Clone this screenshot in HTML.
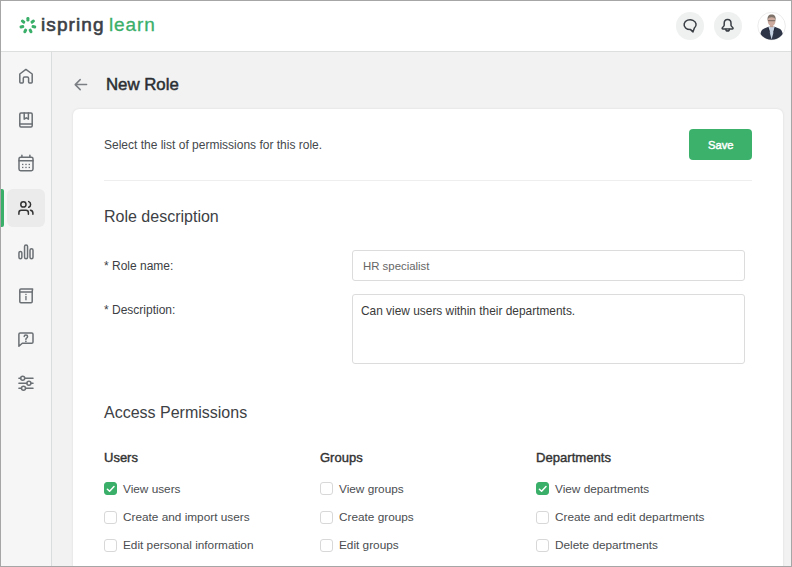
<!DOCTYPE html>
<html><head><meta charset="utf-8">
<style>
*{box-sizing:border-box;margin:0;padding:0}
html,body{width:792px;height:567px;overflow:hidden;background:#f2f2f2}
body{font-family:"Liberation Sans",sans-serif;color:#333;position:relative}
.abs{position:absolute}
#frame{position:absolute;left:0;top:0;width:792px;height:567px;border:1px solid #a6a6a6;pointer-events:none;z-index:50}
#header{position:absolute;left:0;top:0;width:792px;height:52px;background:#fff;border-bottom:1px solid #dddfdf}
#side{position:absolute;left:0;top:52px;width:52px;height:515px;background:#f6f6f6;border-right:1px solid #dadddd}
#card{position:absolute;left:73px;top:109px;width:710px;height:470px;background:#fff;border-radius:6px;box-shadow:0 0 2.5px rgba(0,0,0,0.11)}
.t{position:absolute;white-space:nowrap;line-height:1}
.cb{position:absolute;width:13px;height:13px;border:1px solid #d8d8d8;border-radius:3px;background:#fff}
.cb.on{background:#3aaf6a;border-color:#3aaf6a}
.lb{position:absolute;white-space:nowrap;line-height:1;font-size:11.8px;color:#4a4d50}
svg{position:absolute;overflow:visible}
</style></head><body>
<div id="header">
  <div class="t" style="left:41px;top:14.5px;font-size:19px;color:#3b4046;-webkit-text-stroke:0.6px #3b4046;letter-spacing:1.1px">ispring</div>
  <div class="t" style="left:109px;top:14.5px;font-size:19px;color:#3aaf6a;-webkit-text-stroke:0.3px #3aaf6a;letter-spacing:0.9px">learn</div>
  <div class="abs" style="left:676px;top:12px;width:28px;height:28px;border-radius:50%;background:#eff0f0"></div>
  <div class="abs" style="left:714px;top:12px;width:28px;height:28px;border-radius:50%;background:#eff0f0"></div>
</div>
<div id="side"></div>
<!-- active nav -->
<div class="abs" style="left:7px;top:189px;width:38px;height:38px;border-radius:6px;background:#ebebeb"></div>
<div class="abs" style="left:1px;top:189px;width:3px;height:38px;border-radius:0 2px 2px 0;background:#3aaf6a"></div>

<!-- page-coordinate SVG -->
<svg style="left:0;top:0" width="792" height="567" viewBox="0 0 792 567">
  <!-- logo -->
  <g fill="#3aaf6a" transform="translate(27.9 25.4)">
    <rect x="-1.5" y="-8.5" width="3" height="4.7" rx="1.3"/>
    <rect x="-1.5" y="-8.5" width="3" height="4.7" rx="1.3" transform="rotate(51.43)"/>
    <rect x="-1.5" y="-8.5" width="3" height="4.7" rx="1.3" transform="rotate(102.86)"/>
    <rect x="-1.5" y="-8.5" width="3" height="4.7" rx="1.3" transform="rotate(154.29)"/>
    <rect x="-1.5" y="-8.5" width="3" height="4.7" rx="1.3" transform="rotate(205.71)"/>
    <rect x="-1.5" y="-8.5" width="3" height="4.7" rx="1.3" transform="rotate(257.14)"/>
    <rect x="-1.5" y="-8.5" width="3" height="4.7" rx="1.3" transform="rotate(308.57)"/>
  </g>
  <!-- header icons -->
  <g fill="none" stroke="#3a3f45" stroke-width="1.5" stroke-linejoin="round" stroke-linecap="round">
    <path d="M690.6 29.6 A6 4.95 0 1 1 694.3 28.2 L692.9 31.9 Z"/>
    <path d="M727.6 19.5 C725.5 19.5 724.2 21 724.2 23.3 V25.3 C724.2 26.6 722.1 27.3 722.1 28.2 Q722.1 28.9 722.8 28.9 H732.4 Q733.1 28.9 733.1 28.2 C733.1 27.3 731 26.6 731 25.3 V23.3 C731 21 729.7 19.5 727.6 19.5 Z"/>
    <path d="M725.9 29.2 C725.9 31.7 729.3 31.7 729.3 29.2" fill="#80858a"/>
  </g>
  <!-- avatar -->
  <defs><clipPath id="av"><circle cx="771.6" cy="26.1" r="13.6"/></clipPath></defs>
  <circle cx="771.6" cy="26.1" r="13.8" fill="#fff" stroke="#e6e6e6" stroke-width="0.8"/>
  <g clip-path="url(#av)">
    <path d="M759.8 40 C760 33 761.2 29.6 764.2 28.4 L768.6 26.8 H774.6 L779 28.4 C782 29.6 783.2 33 783.4 40 Z" fill="#2e3547"/>
    <path d="M768.4 26.9 H774.8 L773.2 33.5 L771.6 39.5 L770 33.5 Z" fill="#c6d2e2"/>
    <path d="M768.5 27 L770.4 33.5 L767.9 29.6 Z M774.7 27 L772.8 33.5 L775.3 29.6 Z" fill="#232a3a"/>
    <rect x="770.1" y="24.6" width="3" height="2.6" fill="#bf9c90"/>
    <ellipse cx="771.6" cy="20.8" rx="3.9" ry="5.3" fill="#ccaa9e"/>
    <path d="M767.6 21 C767.1 16.4 768.8 14.6 771.6 14.6 C774.5 14.6 776.2 16.4 775.6 21 C775.3 18.2 774.2 17.2 771.6 17.2 C769 17.2 767.9 18.2 767.6 21 Z" fill="#7e736a"/>
    <path d="M768 20.7 H775.2" stroke="#4a4642" stroke-width="0.7" fill="none"/>
  </g>
  <!-- back arrow -->
  <g fill="none" stroke="#7b7f84" stroke-width="1.5" stroke-linecap="round" stroke-linejoin="round">
    <path d="M86.6 84.6 H75.4 M80.2 79.6 L75.2 84.6 L80.2 89.6"/>
  </g>
  <!-- sidebar icons -->
  <g fill="none" stroke="#6b7075" stroke-width="1.5" stroke-linejoin="round" stroke-linecap="round">
    <!-- home -->
    <path d="M19.8 74 L25.9 69.4 L32.2 74 V82 Q32.2 82.9 31.3 82.9 H29.5 Q28.6 82.9 28.6 82 V78.3 Q28.6 77 27.3 77 H24.6 Q23.3 77 23.3 78.3 V82 Q23.3 82.9 22.4 82.9 H20.7 Q19.8 82.9 19.8 82 Z"/>
    <!-- book -->
    <rect x="19.8" y="113" width="12.4" height="14" rx="1.2"/>
    <path d="M19.8 124.1 H32.2"/>
    <path d="M24.2 113 V119.2 L26.3 117.8 L28.4 119.2 V113"/>
    <!-- calendar -->
    <rect x="19" y="157.2" width="14" height="13.5" rx="1.6"/>
    <path d="M19 160.8 H33 M21.9 155.3 V157.2 M29.9 155.3 V157.2"/>
    <!-- chart -->
    <rect x="18.95" y="251.4" width="2.9" height="7.3" rx="1.45"/>
    <rect x="24.55" y="244.95" width="3" height="13.75" rx="1.5"/>
    <rect x="30.0" y="248.85" width="3" height="9.85" rx="1.5"/>
    <!-- info book -->
    <path d="M19.8 290 Q19.8 288.9 20.9 288.9 H32.6 L32.2 291.5 V301.6 Q32.2 302.7 31.1 302.7 H20.9 Q19.8 302.7 19.8 301.6 Z"/>
    <path d="M19.8 291.9 H32.2"/>
    <!-- help -->
    <path d="M18.9 346.3 V334.2 Q18.9 332.9 20.2 332.9 H31.7 Q33 332.9 33 334.2 V342 Q33 343.3 31.7 343.3 H22.3 Z"/>
    <path d="M24.2 336.6 Q24.2 335 25.9 335 Q27.6 335 27.6 336.6 Q27.6 337.6 26.6 338.1 Q25.9 338.5 25.9 339.5"/>
    <!-- settings -->
    <path d="M18.9 378.2 H20.6 M24.8 378.2 H33 M18.9 383.2 H26.8 M31 383.2 H33 M18.9 388.3 H21.4 M25.6 388.3 H33"/>
    <circle cx="22.7" cy="378.2" r="2"/>
    <circle cx="28.9" cy="383.2" r="2"/>
    <circle cx="23.5" cy="388.3" r="2"/>
  </g>
  <g fill="#6b7075">
    <rect x="22" y="163.8" width="1.4" height="1.3"/><rect x="25.3" y="163.8" width="1.4" height="1.3"/><rect x="28.6" y="163.8" width="1.4" height="1.3"/>
    <rect x="22" y="166.8" width="1.4" height="1.3"/><rect x="25.3" y="166.8" width="1.4" height="1.3"/><rect x="28.6" y="166.8" width="1.4" height="1.3"/>
    <rect x="25.3" y="293.8" width="1.3" height="1.3"/><rect x="25.3" y="296" width="1.3" height="4.3"/>
    <circle cx="25.9" cy="341.3" r="0.85"/>
  </g>
  <!-- users icon active -->
  <g fill="none" stroke="#333" stroke-width="1.5" stroke-linecap="round">
    <circle cx="23.4" cy="204.4" r="2.6"/>
    <path d="M28.7 201.6 A3 3 0 0 1 28.7 207.2"/>
    <path d="M18.9 214.3 V212.7 Q18.9 210.3 21.3 210.3 H26 Q28.4 210.3 28.4 212.7 V214.3"/>
    <path d="M30.4 210.2 Q32.9 210.5 32.9 213 V214.3"/>
  </g>
</svg>

<div class="t" style="left:106px;top:77px;font-size:16.8px;color:#2b2f33;-webkit-text-stroke:0.5px #2b2f33">New Role</div>
<div id="card"></div>
<div class="t" style="left:104px;top:139px;font-size:12px;color:#44484c">Select the list of permissions for this role.</div>
<div class="abs" style="left:689px;top:129px;width:63px;height:31px;background:#3cb16c;border-radius:4px"></div>
<div class="t" style="left:708px;top:139.5px;font-size:11.2px;color:#fff;-webkit-text-stroke:0.45px #fff">Save</div>
<div class="abs" style="left:104px;top:180px;width:648px;height:1px;background:#eeeeee"></div>
<div class="t" style="left:104px;top:209px;font-size:16px;color:#3d4145">Role description</div>
<div class="t" style="left:104px;top:260px;font-size:12px;color:#3c4044">* Role name:</div>
<div class="abs" style="left:352px;top:250px;width:393px;height:31px;border:1px solid #dcdcdc;border-radius:3px;background:#fff"></div>
<div class="t" style="left:363px;top:261px;font-size:11.4px;color:#666">HR specialist</div>
<div class="t" style="left:104px;top:304px;font-size:12px;color:#3c4044">* Description:</div>
<div class="abs" style="left:352px;top:294px;width:393px;height:70px;border:1px solid #dcdcdc;border-radius:3px;background:#fff"></div>
<div class="t" style="left:361px;top:305.5px;font-size:11.9px;color:#3a3a3a">Can view users within their departments.</div>
<div class="t" style="left:104px;top:405px;font-size:16px;color:#3d4145">Access Permissions</div>
<div class="t" style="left:104px;top:450.5px;font-size:13px;color:#333;-webkit-text-stroke:0.4px #333">Users</div>
<div class="t" style="left:320px;top:450.5px;font-size:13px;color:#333;-webkit-text-stroke:0.4px #333">Groups</div>
<div class="t" style="left:536px;top:450.5px;font-size:13.1px;color:#333;-webkit-text-stroke:0.4px #333">Departments</div>

<!-- checkboxes -->
<div class="cb on" style="left:104px;top:482px"></div>
<div class="cb" style="left:104px;top:511px"></div>
<div class="cb" style="left:104px;top:539px"></div>
<div class="cb" style="left:320px;top:482px"></div>
<div class="cb" style="left:320px;top:511px"></div>
<div class="cb" style="left:320px;top:539px"></div>
<div class="cb on" style="left:536px;top:482px"></div>
<div class="cb" style="left:536px;top:511px"></div>
<div class="cb" style="left:536px;top:539px"></div>
<svg style="left:0;top:0" width="792" height="567" viewBox="0 0 792 567">
  <g fill="none" stroke="#fff" stroke-width="1.5" stroke-linecap="round" stroke-linejoin="round">
    <path d="M107.4 489.2 L109.6 491.3 L114 486.6"/>
    <path d="M539.4 489.2 L541.6 491.3 L546 486.6"/>
  </g>
</svg>
<div class="lb" style="left:123px;top:484px">View users</div>
<div class="lb" style="left:123px;top:512px">Create and import users</div>
<div class="lb" style="left:123px;top:540px">Edit personal information</div>
<div class="lb" style="left:339px;top:484px">View groups</div>
<div class="lb" style="left:339px;top:512px">Create groups</div>
<div class="lb" style="left:339px;top:540px">Edit groups</div>
<div class="lb" style="left:555px;top:484px">View departments</div>
<div class="lb" style="left:555px;top:512px">Create and edit departments</div>
<div class="lb" style="left:555px;top:540px">Delete departments</div>
<div id="frame"></div>
</body></html>
